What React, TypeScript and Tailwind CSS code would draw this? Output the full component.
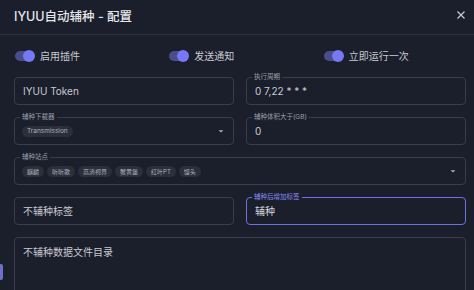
import React from "react";

const font = { fontFamily: '"Inter", "Noto Sans CJK SC", sans-serif' };

function Toggle({ label }: { label: string }) {
  return (
    <div className="flex items-center gap-[6px]">
      <div className="relative h-[10px] w-[19px] rounded-full bg-[#4b4d8a]">
        <div className="absolute right-[-1px] top-[-1px] h-[12px] w-[12px] rounded-full bg-[#7778f5]" />
      </div>
      <span className="text-[10px] text-[#c9cbd2]">{label}</span>
    </div>
  );
}

function Field({
  label,
  children,
  focused,
  className = "",
}: {
  label?: string;
  children?: React.ReactNode;
  focused?: boolean;
  className?: string;
}) {
  return (
    <div
      className={`relative rounded-[4px] border text-[10px] leading-[14px] ${
        focused ? "border-[#6e70e6] border-[1.5px]" : "border-[#3a3d4b]"
      } ${className}`}
    >
      {label && (
        <span
          className={`absolute left-[5px] top-[-6px] bg-[#1b1e2b] px-[2px] text-[6.5px] leading-[10px] ${
            focused ? "text-[#8a8cf0]" : "text-[#9a9eaa]"
          }`}
        >
          {label}
        </span>
      )}
      {children}
    </div>
  );
}

function Chip({ text }: { text: string }) {
  return (
    <span className="rounded-full bg-[#2b2f3c] px-[5px] py-[2px] text-[6px] leading-[7px] text-[#aeb2bc]">
      {text}
    </span>
  );
}

export default function App() {
  return (
    <div className="relative h-[290px] w-[474px] overflow-hidden bg-[#1b1e2b]" style={font}>
      <div className="flex h-[35px] items-center justify-between border-b border-[#2c2f3c] pl-[14px] pr-[6px]">
        <span className="text-[12.5px] font-medium text-[#e4e6ec]">IYUU自动辅种 - 配置</span>
        <svg width="14" height="14" viewBox="0 0 24 24" className="mt-[-4px]" stroke="#c9cbd2" strokeWidth="2" fill="none">
          <path d="M6 6l12 12M18 6L6 18" />
        </svg>
      </div>
      <div className="flex flex-col pl-[14px] pr-[8px]">
        <div className="grid h-[42px] grid-cols-3 items-center gap-x-[12px] pl-[1px]">
          <Toggle label="启用插件" />
          <Toggle label="发送通知" />
          <Toggle label="立即运行一次" />
        </div>
        <div className="grid grid-cols-2 gap-x-[12px] gap-y-[12px]">
          <Field className="flex h-[28px] items-center px-[8px]">
            <span className="text-[#c9cbd2]">IYUU Token</span>
          </Field>
          <Field label="执行周期" className="flex h-[28px] items-center px-[8px]">
            <span className="text-[#c9cbd2]">0 7,22 * * *</span>
          </Field>
          <Field label="辅种下载器" className="flex h-[28px] items-center justify-between px-[7px]">
            <span className="rounded-full bg-[#2b2f3c] px-[5px] py-[2px] text-[6.5px] leading-[7px] text-[#aeb2bc]">
              Transmission
            </span>
            <svg width="8" height="8" viewBox="0 0 10 10" className="mr-[1px]">
              <path d="M2 4h6l-3 3z" fill="#aeb2bc" />
            </svg>
          </Field>
          <Field label="辅种体积大于(GB)" className="flex h-[28px] items-center px-[8px]">
            <span className="text-[#c9cbd2]">0</span>
          </Field>
          <Field label="辅种站点" className="col-span-2 flex h-[28px] items-center justify-between px-[7px]">
            <div className="flex items-center gap-[3px]">
              <Chip text="麒麟" />
              <Chip text="听听歌" />
              <Chip text="高清视界" />
              <Chip text="蟹黄堡" />
              <Chip text="红叶PT" />
              <Chip text="馒头" />
            </div>
            <svg width="8" height="8" viewBox="0 0 10 10" className="mr-[1px]">
              <path d="M2 4h6l-3 3z" fill="#aeb2bc" />
            </svg>
          </Field>
          <Field className="flex h-[28px] items-center px-[8px]">
            <span className="text-[#c9cbd2]">不辅种标签</span>
          </Field>
          <Field label="辅种后增加标签" focused className="flex h-[28px] items-center px-[8px]">
            <span className="text-[#d6d8de]">辅种</span>
          </Field>
          <Field className="col-span-2 h-[60px] px-[8px] pt-[7px]">
            <span className="text-[#c9cbd2]">不辅种数据文件目录</span>
          </Field>
        </div>
      </div>
      <div className="absolute left-0 top-[264px] h-[16px] w-[3px] rounded-r-[2px] bg-[#6d6ec9]" />
    </div>
  );
}
